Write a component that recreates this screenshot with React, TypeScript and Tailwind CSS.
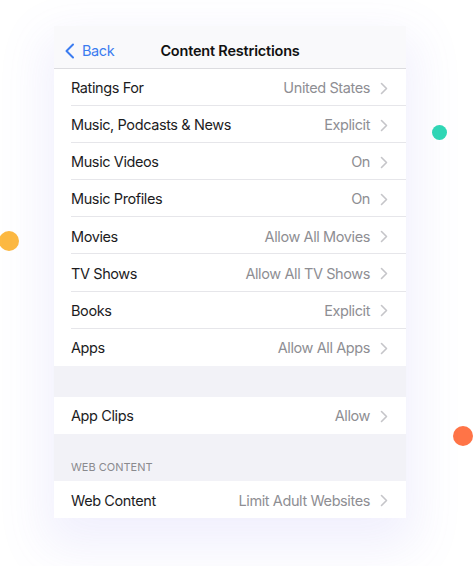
import React from "react";

type Row = { label: string; value: string };

const ratings: Row[] = [
  { label: "Ratings For", value: "United States" },
  { label: "Music, Podcasts & News", value: "Explicit" },
  { label: "Music Videos", value: "On" },
  { label: "Music Profiles", value: "On" },
  { label: "Movies", value: "Allow All Movies" },
  { label: "TV Shows", value: "Allow All TV Shows" },
  { label: "Books", value: "Explicit" },
  { label: "Apps", value: "Allow All Apps" },
];

function Chevron() {
  return (
    <svg width="8" height="13" viewBox="0 0 8 13" className="ml-[10px] shrink-0">
      <path
        d="M1.5 1.5 L6.5 6.5 L1.5 11.5"
        fill="none"
        stroke="#c5c5c9"
        strokeWidth="1.6"
        strokeLinecap="round"
        strokeLinejoin="round"
      />
    </svg>
  );
}

function SettingRow({ row, last }: { row: Row; last?: boolean }) {
  return (
    <div className="flex h-[37.1px] bg-white pl-[17px]">
      <div
        className={
          "flex flex-1 items-center pr-[18px] pt-[2px] " +
          (last ? "" : "border-b border-[#e6e6ea]")
        }
      >
        <span className="flex-1 text-[#1c1c1e]">{row.label}</span>
        <span className="text-[#8e8e93]">{row.value}</span>
        <Chevron />
      </div>
    </div>
  );
}

export default function App() {
  return (
    <div
      className="relative h-[566px] w-[474px] overflow-hidden bg-white pl-[54px] pt-[26px] text-[14.5px] tracking-[-0.4px]"
      style={{ fontFamily: "Inter, 'Noto Sans', sans-serif" }}
    >
      {/* decorative dots */}
      <div className="absolute left-[-1px] top-[231px] h-[20px] w-[20px] rounded-full bg-[#fdb941]" />
      <div className="absolute left-[432px] top-[125px] h-[15px] w-[15px] rounded-full bg-[#2fd8b5]" />
      <div className="absolute left-[453px] top-[426px] h-[20px] w-[20px] rounded-full bg-[#ff7447]" />

      <div className="relative w-[352px] bg-[#f2f2f7] shadow-[0_20px_45px_10px_rgba(120,110,240,0.10)]">
        {/* nav bar */}
        <div className="relative flex h-[43px] items-center border-b border-[#dcdce0] bg-[#f9f9fb] pl-[10px] pt-[8px]">
          <div className="flex items-center text-[#3b7cf0]">
            <svg width="12" height="16" viewBox="0 0 12 16" className="mr-[6px]">
              <path
                d="M9 1.5 L2.5 8 L9 14.5"
                fill="none"
                stroke="#3b7cf0"
                strokeWidth="2"
                strokeLinecap="round"
                strokeLinejoin="round"
              />
            </svg>
            <span>Back</span>
          </div>
          <span className="absolute left-0 right-0 text-center font-semibold tracking-[-0.2px] text-[#111]">
            Content Restrictions
          </span>
        </div>

        {ratings.map((r, i) => (
          <SettingRow key={r.label} row={r} last={i === ratings.length - 1} />
        ))}

        <div className="h-[31px]" />
        <SettingRow row={{ label: "App Clips", value: "Allow" }} last />

        <div className="flex h-[47px] items-end pb-[5px] pl-[17px] text-[11px] tracking-[0px] text-[#8a8a8e]">
          WEB CONTENT
        </div>
        <SettingRow row={{ label: "Web Content", value: "Limit Adult Websites" }} last />
      </div>
    </div>
  );
}
